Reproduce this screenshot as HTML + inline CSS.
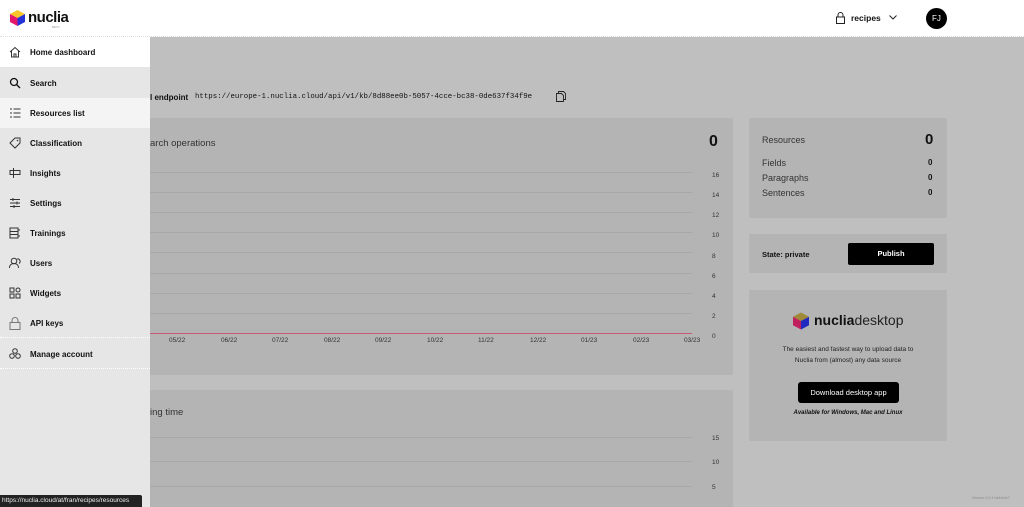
<!DOCTYPE html>
<html><head><meta charset="utf-8"><style>
*{margin:0;padding:0;box-sizing:border-box}
body{width:1024px;height:507px;overflow:hidden;background:#bfbfbf;font-family:"Liberation Sans",sans-serif;position:relative;color:#111}
.hdr{position:absolute;left:0;top:0;width:1024px;height:37px;background:#fff;border-bottom:1px dotted #ddd}
.side{position:absolute;left:0;top:37px;width:150px;height:470px;background:#e6e6e6}
.it{position:absolute;left:0;width:150px;height:30px;font-size:8px;font-weight:bold;display:flex;align-items:center;padding-left:30px}
.it svg{position:absolute;left:9px;top:9px}
.card{position:absolute;background:#b4b4b4;border-radius:2px}
.a{position:absolute;font-size:9px}
.gl{position:absolute;left:150px;width:542px;height:1px;background:#a8a8a8}
.yl{position:absolute;left:712px;font-size:6.5px;color:#333}
.xl{position:absolute;top:337px;font-size:6.5px;color:#333}
</style></head><body>
<div class="hdr">
<svg style="position:absolute;left:10px;top:10px" width="15" height="16" viewBox="0 0 15 16"><polygon points="7.5,0 15,4 7.5,8 0,4" fill="#f7c72a"/><polygon points="0,4 7.5,8 7.5,16 0,12" fill="#e5176d"/><polygon points="15,4 7.5,8 7.5,16 15,12" fill="#2433d8"/></svg>
<div class="a" style="left:28px;top:9px;font-size:15px;font-weight:bold;letter-spacing:-0.5px">nuclia</div>
<div class="a" style="left:52px;top:25px;font-size:3px;color:#999">BETA</div>
<svg style="position:absolute;left:836px;top:12px" width="9" height="12" viewBox="0 0 9 12"><rect x="0.5" y="5" width="8" height="6.5" fill="none" stroke="#222"/><path d="M2 5V3a2.5 2.5 0 0 1 5 0v2" fill="none" stroke="#222"/></svg>
<div class="a" style="left:851px;top:13px;font-size:8.5px;font-weight:bold">recipes</div>
<svg style="position:absolute;left:889px;top:15px" width="8" height="5"><path d="M0.5 0.5L4 4 7.5 0.5" fill="none" stroke="#222"/></svg>
<div style="position:absolute;left:926px;top:8px;width:21px;height:21px;border-radius:50%;background:#000;color:#fff;font-size:8px;text-align:center;line-height:21px">FJ</div>
</div>

<div class="a" style="left:150px;top:93px;font-size:8px;font-weight:bold">l endpoint</div>
<div class="a" style="left:195px;top:93px;font-size:7.4px;font-family:'Liberation Mono',monospace">https://europe-1.nuclia.cloud/api/v1/kb/8d88ee0b-5057-4cce-bc38-0de637f34f9e</div>
<svg style="position:absolute;left:556px;top:91px" width="10" height="11"><path d="M2.5 2.5V0.5h5l2 2v6h-2M0.5 2.5h5l2 2v6h-7z" fill="none" stroke="#222" stroke-width="0.9"/></svg>

<div class="card" style="left:130px;top:118px;width:603px;height:257px"></div>
<div class="a" style="left:150px;top:138px;font-size:9.5px;color:#333">arch operations</div>
<div class="a" style="left:709px;top:133px;font-size:16px;font-weight:bold">0</div>
<div class="gl" style="top:172px"></div><div class="gl" style="top:192px"></div><div class="gl" style="top:212px"></div><div class="gl" style="top:232px"></div><div class="gl" style="top:252px"></div><div class="gl" style="top:273px"></div><div class="gl" style="top:293px"></div><div class="gl" style="top:313px"></div>
<div class="gl" style="top:333px;background:#c85a74"></div>
<div class="yl" style="top:172px">16</div><div class="yl" style="top:192px">14</div><div class="yl" style="top:212px">12</div><div class="yl" style="top:232px">10</div><div class="yl" style="top:253px">8</div><div class="yl" style="top:273px">6</div><div class="yl" style="top:293px">4</div><div class="yl" style="top:313px">2</div><div class="yl" style="top:333px">0</div>
<div class="xl" style="left:169px">05/22</div><div class="xl" style="left:221px">06/22</div><div class="xl" style="left:272px">07/22</div><div class="xl" style="left:324px">08/22</div><div class="xl" style="left:375px">09/22</div><div class="xl" style="left:427px">10/22</div><div class="xl" style="left:478px">11/22</div><div class="xl" style="left:530px">12/22</div><div class="xl" style="left:581px">01/23</div><div class="xl" style="left:633px">02/23</div><div class="xl" style="left:684px">03/23</div>

<div class="card" style="left:130px;top:390px;width:603px;height:117px"></div>
<div class="a" style="left:150px;top:407px;font-size:9.5px;color:#333">ing time</div>
<div class="gl" style="top:437px"></div><div class="gl" style="top:461px"></div><div class="gl" style="top:486px"></div>
<div class="yl" style="top:435px">15</div><div class="yl" style="top:459px">10</div><div class="yl" style="top:484px">5</div>

<div class="card" style="left:749px;top:118px;width:198px;height:100px"></div>
<div class="a" style="left:762px;top:135px;color:#333">Resources</div>
<div class="a" style="left:925px;top:131px;font-size:15px;font-weight:bold">0</div>
<div class="a" style="left:762px;top:158px;color:#333">Fields</div><div class="a" style="left:928px;top:158px;font-size:8px;font-weight:bold">0</div>
<div class="a" style="left:762px;top:173px;color:#333">Paragraphs</div><div class="a" style="left:928px;top:173px;font-size:8px;font-weight:bold">0</div>
<div class="a" style="left:762px;top:188px;color:#333">Sentences</div><div class="a" style="left:928px;top:188px;font-size:8px;font-weight:bold">0</div>

<div class="card" style="left:749px;top:234px;width:198px;height:39px"></div>
<div class="a" style="left:762px;top:250px;font-size:7.5px;font-weight:bold">State: private</div>
<div style="position:absolute;left:848px;top:243px;width:86px;height:22px;background:#000;border-radius:2px;color:#fff;font-size:7.5px;font-weight:bold;text-align:center;line-height:22px">Publish</div>

<div class="card" style="left:749px;top:290px;width:198px;height:151px"></div>
<svg style="position:absolute;left:793px;top:312px" width="16" height="18" viewBox="0 0 15 16"><polygon points="7.5,0 15,4 7.5,8 0,4" fill="#a08a3a"/><polygon points="0,4 7.5,8 7.5,16 0,12" fill="#c0205e"/><polygon points="15,4 7.5,8 7.5,16 15,12" fill="#2128c0"/></svg>
<div class="a" style="left:814px;top:312px;font-size:14px"><b>nuclia</b><span style="color:#222">desktop</span></div>
<div class="a" style="left:749px;top:344px;width:198px;text-align:center;font-size:6.5px;line-height:11px;color:#222">The easiest and fastest way to upload data to<br>Nuclia from (almost) any data source</div>
<div style="position:absolute;left:798px;top:382px;width:101px;height:21px;background:#000;border-radius:3px;color:#fff;font-size:7.5px;text-align:center;line-height:21px">Download desktop app</div>
<div class="a" style="left:749px;top:410px;width:198px;text-align:center;font-size:6px;font-weight:bold;font-style:italic">Available for Windows, Mac and Linux</div>
<div class="a" style="left:972px;top:496px;font-size:3.5px;color:#888">Version: 0.0.1+af44c0c7</div>

<div class="side">
<div class="it" style="top:0;background:#fff">Home dashboard<svg width="12" height="12"><path d="M1 6L6 1.5 11 6M2.5 5v6h7V5M5 11V8h2v3" fill="none" stroke="#333"/></svg></div>
<div class="it" style="top:31px">Search<svg width="12" height="12"><circle cx="5" cy="5" r="3.5" fill="none" stroke="#111" stroke-width="1.3"/><path d="M7.5 7.5L11 11" stroke="#111" stroke-width="1.3"/></svg></div>
<div class="it" style="top:61px;background:#f4f4f4">Resources list<svg width="12" height="12"><path d="M4.5 2h7M4.5 6h7M4.5 10h7M1 2h2M1 6h2M1 10h2" stroke="#333"/></svg></div>
<div class="it" style="top:91px">Classification<svg width="12" height="12"><path d="M1 6L6 1h5v5l-5 5z" fill="none" stroke="#333"/><circle cx="8.5" cy="3.5" r="0.8" fill="#333"/></svg></div>
<div class="it" style="top:121px">Insights<svg width="12" height="12"><path d="M1 3.5h10v4H1zM4.5 1v10" fill="none" stroke="#333"/></svg></div>
<div class="it" style="top:151px">Settings<svg width="12" height="12"><path d="M1 2.5h10M1 6h10M1 9.5h10" stroke="#333"/><path d="M4 1v3M8 4.5v3M5 8v3" stroke="#333"/></svg></div>
<div class="it" style="top:181px">Trainings<svg width="12" height="12"><path d="M1 1h8v10H1zM1 4.5h8M1 7.5h8M9 3h2M9 9h2" fill="none" stroke="#333"/></svg></div>
<div class="it" style="top:211px">Users<svg width="12" height="12"><circle cx="5" cy="4" r="2.8" fill="none" stroke="#333"/><path d="M0.5 11c0-3 2-4.5 4.5-4.5S9.5 8 9.5 11M8 2a2.5 2.5 0 0 1 2 4.5" fill="none" stroke="#333"/></svg></div>
<div class="it" style="top:241px">Widgets<svg width="12" height="12"><path d="M1 1h4v4H1zM1 7h4v4H1zM7 7h4v4H7z" fill="none" stroke="#333"/><circle cx="9" cy="3" r="2" fill="none" stroke="#333"/></svg></div>
<div class="it" style="top:271px">API keys<svg width="12" height="13"><rect x="1" y="5.5" width="10" height="7" fill="none" stroke="#777"/><path d="M3 5.5V3.5a3 3 0 0 1 6 0v2" fill="none" stroke="#777"/></svg></div>
<div style="position:absolute;left:0;top:300px;width:150px;border-top:1px dotted #fff"></div>
<div class="it" style="top:302px">Manage account<svg width="12" height="12"><circle cx="6" cy="3" r="2.3" fill="none" stroke="#333"/><circle cx="3" cy="8" r="2.3" fill="none" stroke="#333"/><circle cx="9" cy="8" r="2.3" fill="none" stroke="#333"/></svg></div>
<div style="position:absolute;left:0;top:331px;width:150px;border-top:1px dotted #fff"></div>
</div>
<div style="position:absolute;left:0;top:495px;width:142px;height:12px;background:#222;color:#eee;font-size:6.5px;line-height:12px;padding-left:2px;border-radius:0 2px 0 0">https://nuclia.cloud/at/fran/recipes/resources</div>
</body></html>
